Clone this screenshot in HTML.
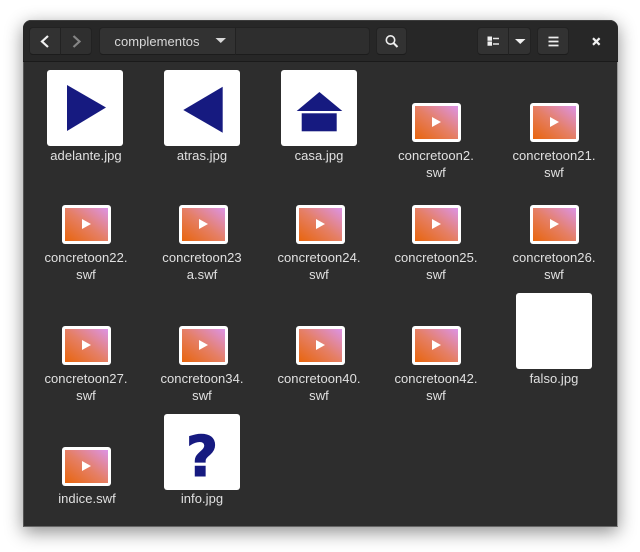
<!DOCTYPE html>
<html><head><meta charset="utf-8">
<style>
html,body{margin:0;padding:0;width:640px;height:552px;overflow:hidden;background:#fff}
*{box-sizing:border-box}
#win{position:absolute;left:23px;top:20px;width:595px;height:507px;background:#2d2d2d;border-radius:8px 8px 0 0;box-shadow:0 5px 18px rgba(0,0,0,.45);border-right:1px solid #999;border-left:1px solid #555;border-bottom:1px solid #666;overflow:hidden}
#bar{position:absolute;left:23px;top:20px;width:595px;height:42px;background:#272727;border-radius:8px 8px 0 0;border-top:1px solid #3c3c3c;border-bottom:1px solid #1a1a1a}
.b{position:absolute;top:27px;height:28px;background:#323232;border:1px solid #222;border-bottom-color:#1c1c1c}
.l{position:absolute;width:110px;text-align:center;font:13px/17px "Liberation Sans",sans-serif;color:#e0e0e0;letter-spacing:.05px}
.t{position:absolute;width:76px;height:76px;background:#fff;border-radius:3px}
.t svg{position:absolute;left:0;top:0}
.v{position:absolute;width:49.500px;height:39.500px;margin-left:.5px;margin-top:.5px;background:#fff;border-radius:3px;padding:3.500px}
.v i{display:block;position:relative;width:42.500px;height:32.500px;background:linear-gradient(to top right,#e8650d 0%,#e57f66 50%,#dc94e6 100%)}
.v i:after{content:"";position:absolute;left:17px;top:11px;border-left:9px solid #fff;border-top:5px solid transparent;border-bottom:5px solid transparent}
svg.o{position:absolute;overflow:visible}
</style></head><body>
<div id="win"></div>
<div id="bar"></div>
<div class="b" style="left:29px;width:32px;border-radius:4px 0 0 4px"></div>
<div class="b" style="left:60px;width:32px;border-radius:0 4px 4px 0;background:#2f2f2f"></div>
<div class="b" style="left:99px;width:137px;border-radius:4px 0 0 4px"></div>
<div class="b" style="left:235px;width:135px;border-radius:0 4px 4px 0;background:#2e2e2e"></div>
<div class="b" style="left:376px;width:31px;border-radius:4px"></div>
<div class="b" style="left:477px;width:32px;border-radius:4px 0 0 4px"></div>
<div class="b" style="left:508px;width:23px;border-radius:0 4px 4px 0"></div>
<div class="b" style="left:537px;width:32px;border-radius:4px"></div>
<div class="l" style="left:102px;top:33px;width:110px;color:#d8d8d8">complementos</div>
<svg class="o" style="left:0;top:0" width="640" height="62" fill="none">
<path d="M48 36L42 41.500L48 47" stroke="#f0f0f0" stroke-width="2.200"/>
<path d="M73.500 36L79.500 41.500L73.500 47" stroke="#858585" stroke-width="2.200"/>
<path d="M215.500 38H226L220.750 43Z" fill="#d8d8d8"/>
<circle cx="390.500" cy="40" r="4.200" stroke="#eee" stroke-width="1.600"/>
<path d="M393.500 43L397.500 47" stroke="#eee" stroke-width="2"/>
<path d="M487.500 36.500h4.500v4.200h-4.500zM487.500 41.500h4.500v4.200h-4.500z" fill="#f0f0f0"/>
<path d="M493 38.500h6M493 44h6" stroke="#e4e4e4" stroke-width="1.500"/>
<path d="M515 39H525.500L520.250 44Z" fill="#f0f0f0"/>
<path d="M548.500 37.500h10M548.500 41.500h10M548.500 45.500h10" stroke="#eee" stroke-width="1.800"/>
<path d="M593 38.200L599.600 44.800M599.600 38.200L593 44.800" stroke="#f0f0f0" stroke-width="2.200"/>
</svg>

<div class="t" style="left:47px;top:70px"><svg width="76" height="76"><path d="M20 15L59 37.500L20 61Z" fill="#161a80"/></svg></div>
<div class="t" style="left:164px;top:70px"><svg width="76" height="76"><path d="M58.700 16.700V62.700L19.300 40Z" fill="#161a80"/></svg></div>
<div class="t" style="left:281px;top:70px"><svg width="76" height="76"><path d="M15.700 41L38.400 22L61.300 41Z" fill="#161a80"/><rect x="20.700" y="43.300" width="35" height="18" fill="#161a80"/></svg></div>
<div class="t" style="left:516px;top:293px"></div>
<div class="t" style="left:164px;top:414px"><svg width="76" height="76"><text x="38" y="62" text-anchor="middle" font-family="DejaVu Sans,sans-serif" font-weight="bold" font-size="56" fill="#161a80" stroke="#161a80" stroke-width="1">?</text></svg></div>

<div class="v" style="left:411px;top:102px"><i></i></div>
<div class="v" style="left:529px;top:102px"><i></i></div>
<div class="v" style="left:61px;top:204px"><i></i></div>
<div class="v" style="left:178px;top:204px"><i></i></div>
<div class="v" style="left:295px;top:204px"><i></i></div>
<div class="v" style="left:411px;top:204px"><i></i></div>
<div class="v" style="left:529px;top:204px"><i></i></div>
<div class="v" style="left:61px;top:325px"><i></i></div>
<div class="v" style="left:178px;top:325px"><i></i></div>
<div class="v" style="left:295px;top:325px"><i></i></div>
<div class="v" style="left:411px;top:325px"><i></i></div>
<div class="v" style="left:61px;top:446px"><i></i></div>

<div class="l" style="left:31px;top:147px">adelante.jpg</div>
<div class="l" style="left:147px;top:147px">atras.jpg</div>
<div class="l" style="left:264px;top:147px">casa.jpg</div>
<div class="l" style="left:381px;top:147px">concretoon2.<br>swf</div>
<div class="l" style="left:499px;top:147px">concretoon21.<br>swf</div>
<div class="l" style="left:31px;top:249px">concretoon22.<br>swf</div>
<div class="l" style="left:147px;top:249px">concretoon23<br>a.swf</div>
<div class="l" style="left:264px;top:249px">concretoon24.<br>swf</div>
<div class="l" style="left:381px;top:249px">concretoon25.<br>swf</div>
<div class="l" style="left:499px;top:249px">concretoon26.<br>swf</div>
<div class="l" style="left:31px;top:370px">concretoon27.<br>swf</div>
<div class="l" style="left:147px;top:370px">concretoon34.<br>swf</div>
<div class="l" style="left:264px;top:370px">concretoon40.<br>swf</div>
<div class="l" style="left:381px;top:370px">concretoon42.<br>swf</div>
<div class="l" style="left:499px;top:370px">falso.jpg</div>
<div class="l" style="left:32px;top:490px">indice.swf</div>
<div class="l" style="left:147px;top:490px">info.jpg</div>
</body></html>
